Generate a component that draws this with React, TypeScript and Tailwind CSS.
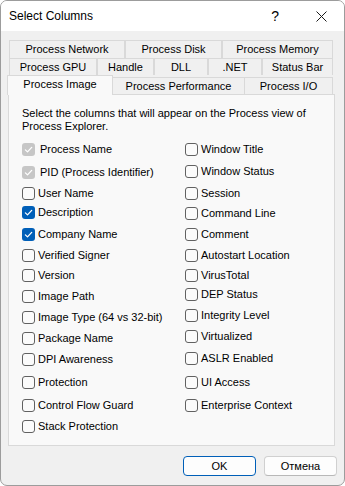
import React from "react";

type Item = { label: string; state?: "checked" | "locked"; gap: string };

const leftItems: Item[] = [
  { label: "Process Name", state: "locked", gap: "mt-0" },
  { label: "PID (Process Identifier)", state: "locked", gap: "mt-[10px]" },
  { label: "User Name", gap: "mt-[8px]" },
  { label: "Description", state: "checked", gap: "mt-[6px]" },
  { label: "Company Name", state: "checked", gap: "mt-[9px]" },
  { label: "Verified Signer", gap: "mt-[8px]" },
  { label: "Version", gap: "mt-[7px]" },
  { label: "Image Path", gap: "mt-[8px]" },
  { label: "Image Type (64 vs 32-bit)", gap: "mt-[8px]" },
  { label: "Package Name", gap: "mt-[8px]" },
  { label: "DPI Awareness", gap: "mt-[8px]" },
  { label: "Protection", gap: "mt-[10px]" },
  { label: "Control Flow Guard", gap: "mt-[10px]" },
  { label: "Stack Protection", gap: "mt-[8px]" },
];

const rightItems: Item[] = [
  { label: "Window Title", gap: "mt-0" },
  { label: "Window Status", gap: "mt-[9px]" },
  { label: "Session", gap: "mt-[9px]" },
  { label: "Command Line", gap: "mt-[7px]" },
  { label: "Comment", gap: "mt-[8px]" },
  { label: "Autostart Location", gap: "mt-[8px]" },
  { label: "VirusTotal", gap: "mt-[7px]" },
  { label: "DEP Status", gap: "mt-[6px]" },
  { label: "Integrity Level", gap: "mt-[8px]" },
  { label: "Virtualized", gap: "mt-[8px]" },
  { label: "ASLR Enabled", gap: "mt-[9px]" },
  { label: "UI Access", gap: "mt-[11px]" },
  { label: "Enterprise Context", gap: "mt-[10px]" },
];

function Check() {
  return (
    <svg viewBox="0 0 13 13" className="h-[13px] w-[13px]">
      <path
        d="M3.4 6.9 L5.5 8.9 L9.7 4.4"
        fill="none"
        stroke="#ffffff"
        strokeWidth="1.3"
        strokeLinecap="round"
        strokeLinejoin="round"
      />
    </svg>
  );
}

function CheckRow({ item }: { item: Item }) {
  let box = "border border-[#616161] bg-[#fbfbfb]";
  if (item.state === "checked") box = "bg-[#005fb8]";
  if (item.state === "locked") box = "bg-[#c6c6c6]";
  return (
    <div className={`flex h-[13px] items-center ${item.gap}`}>
      <span className={`flex h-[13px] w-[13px] shrink-0 items-center justify-center rounded-[3px] ${box}`}>
        {item.state ? <Check /> : null}
      </span>
      <span
        className={`whitespace-nowrap leading-none text-black ${
          item.state === "locked" ? "ml-[5px]" : "ml-[3px]"
        }`}
      >
        {item.label}
      </span>
    </div>
  );
}

function Tab({ label, w }: { label: string; w: string }) {
  return (
    <div
      className={`flex h-full shrink-0 items-center justify-center border-x border-t border-[#d9d9d9] bg-[#f0f0f0] ${w}`}
    >
      {label}
    </div>
  );
}

export default function App() {
  return (
    <div className="flex h-[486px] w-[345px] flex-col overflow-hidden rounded-[7px] border border-[#9c9c9c] bg-[#f0f0f0] font-['Liberation_Sans',Arial,sans-serif] text-[11px] text-black">
      <div className="flex h-[30px] shrink-0 items-center bg-white pl-[8px]">
        <span className="text-[12px]">Select Columns</span>
        <span className="ml-auto mr-[37px] text-[14px]">?</span>
        <svg viewBox="0 0 11 11" className="mr-[17px] h-[11px] w-[11px]">
          <path d="M0.5 0.5 L10.5 10.5 M10.5 0.5 L0.5 10.5" stroke="#1a1a1a" strokeWidth="1" />
        </svg>
      </div>

      <div className="flex flex-1 flex-col pl-[7px] pr-[9px] pt-[9px]">
        <div className="ml-px mr-[2px] flex h-[18px]">
          <Tab label="Process Network" w="w-[116px]" />
          <Tab label="Process Disk" w="w-[97px]" />
          <Tab label="Process Memory" w="w-[111px]" />
        </div>
        <div className="ml-px mr-[2px] flex h-[17px]">
          <Tab label="Process GPU" w="w-[88px]" />
          <Tab label="Handle" w="w-[57px]" />
          <Tab label="DLL" w="w-[54px]" />
          <Tab label=".NET" w="w-[54px]" />
          <Tab label="Status Bar" w="w-[71px]" />
        </div>
        <div className="relative z-10 -mb-px -ml-px mr-[2px] flex h-[20px] items-end">
          <div className="flex h-[20px] w-[106px] shrink-0 items-center justify-center border-x border-t border-[#d9d9d9] bg-[#f9f9f9] pb-[3px]">
            Process Image
          </div>
          <div className="mb-px flex h-[17px] w-[132px] shrink-0 items-center justify-center border-r border-t border-[#d9d9d9] bg-[#f0f0f0]">
            Process Performance
          </div>
          <div className="mb-px flex h-[17px] w-[88px] shrink-0 items-center justify-center border-r border-t border-[#d9d9d9] bg-[#f0f0f0]">
            Process I/O
          </div>
        </div>

        <div className="h-[352px] border border-[#d9d9d9] bg-[#f9f9f9] pl-[13px] pt-[12px]">
          <p className="leading-[13px]">
            Select the columns that will appear on the Process view of
            <br />
            Process Explorer.
          </p>
          <div className="mt-[10px] flex">
            <div className="flex w-[163px] flex-col">
              {leftItems.map((it) => (
                <CheckRow key={it.label} item={it} />
              ))}
            </div>
            <div className="flex flex-col">
              {rightItems.map((it) => (
                <CheckRow key={it.label} item={it} />
              ))}
            </div>
          </div>
        </div>

        <div className="-mr-[2px] mt-[10px] flex justify-end gap-[8px]">
          <button className="flex h-[20px] w-[73px] items-center justify-center rounded-[4px] border border-[#005fb8] bg-[#fdfdfd]">
            OK
          </button>
          <button className="flex h-[20px] w-[73px] items-center justify-center rounded-[4px] border border-[#d0d0d0] border-b-[#b8b8b8] bg-[#fdfdfd]">
            Отмена
          </button>
        </div>
      </div>
    </div>
  );
}
